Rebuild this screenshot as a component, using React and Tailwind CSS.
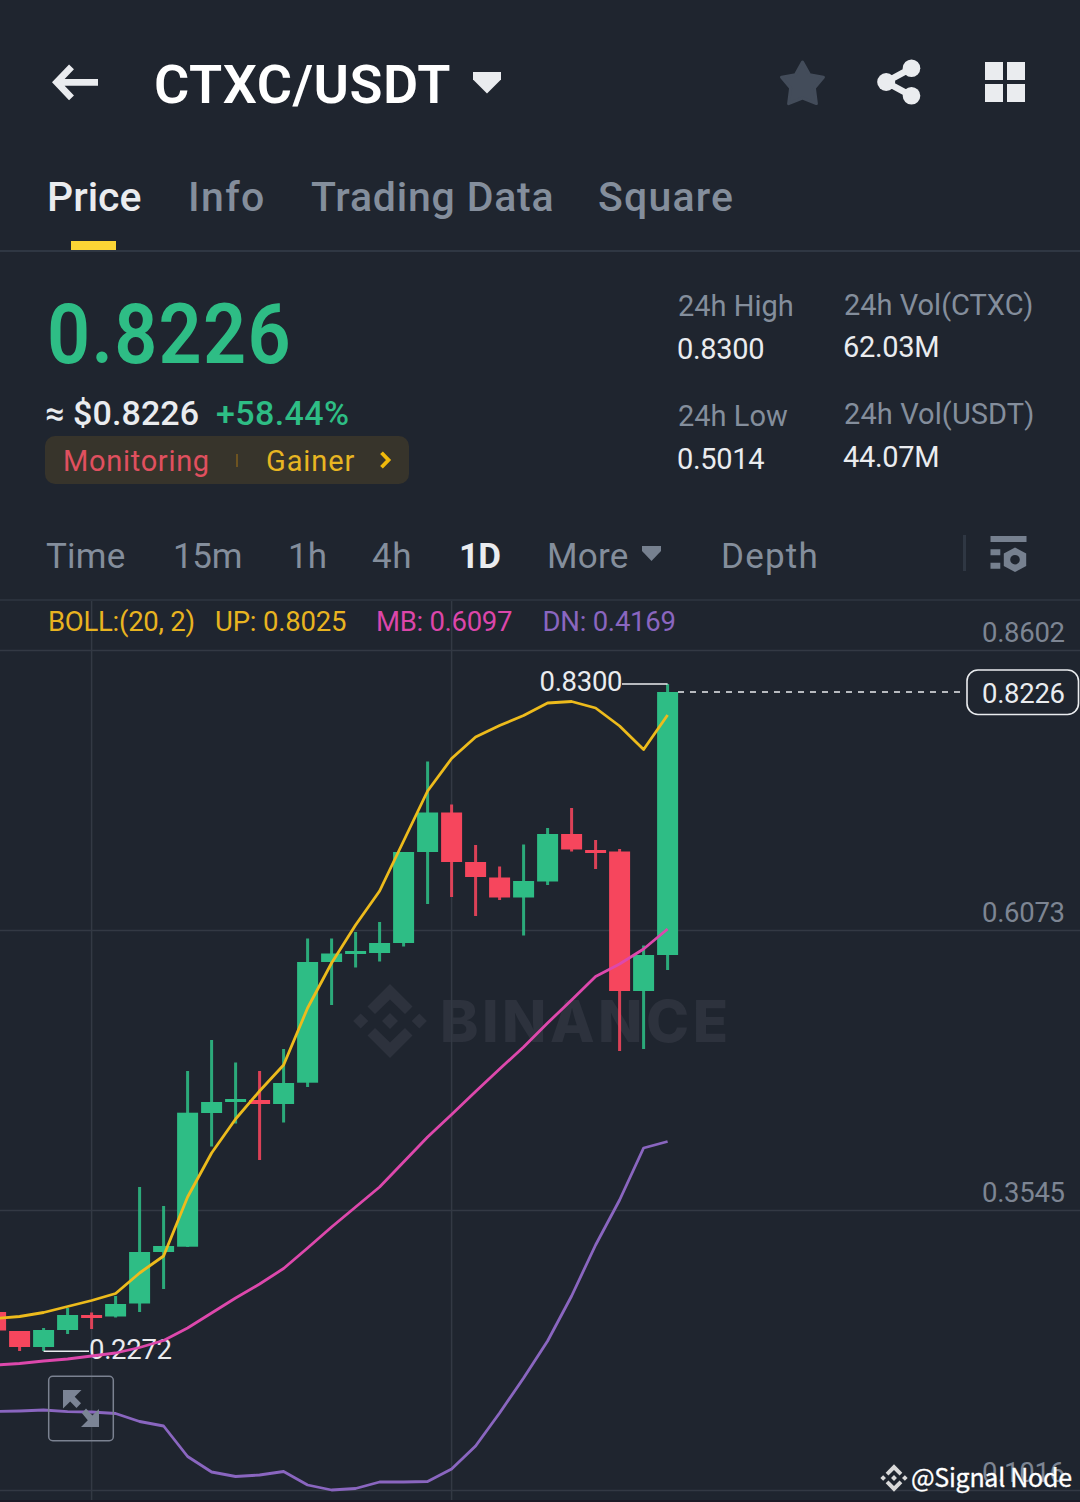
import React from 'react';
import clsx from 'clsx';

const UP = '#2ebd85';
const DOWN = '#f6465d';
const FIRST_X = -4.4;
const STEP = 24;

const tabs = [
  { label: 'Price', className: 'w-[141px]', active: true },
  { label: 'Info', className: 'w-[123px] tracking-[1.4px]' },
  { label: 'Trading Data', className: 'w-[287px] tracking-[0.8px]' },
  { label: 'Square', className: 'tracking-[1.2px]' },
];

const intervals = [
  { label: 'Time', className: 'w-[127px] tracking-[0.2px]' },
  { label: '15m', className: 'w-[115px] tracking-[-0.3px]' },
  { label: '1h', className: 'w-[84px]' },
  { label: '4h', className: 'w-[87px] tracking-[0.5px]' },
  { label: '1D', className: 'w-[88px] tracking-[-0.8px]', active: true },
];

// [direction, high, body top, body bottom, low] in chart pixels
const candles = [
  ['down', 1312, 1312, 1330.5, 1330.5],
  ['down', 1331, 1331, 1347, 1351],
  ['up', 1328, 1330, 1347, 1351],
  ['up', 1308, 1315, 1330, 1334],
  ['down', 1312.5, 1315, 1318, 1329],
  ['up', 1296, 1304, 1316.5, 1317.5],
  ['up', 1187, 1252, 1303.5, 1312],
  ['up', 1206, 1246, 1252, 1289],
  ['up', 1071, 1112.7, 1246.7, 1247],
  ['up', 1040, 1102, 1113, 1146.5],
  ['up', 1062.5, 1099, 1102, 1123.5],
  ['down', 1071, 1100, 1104, 1160],
  ['up', 1049, 1083, 1104, 1122.5],
  ['up', 938.5, 962, 1082.7, 1087],
  ['up', 938.5, 953.5, 962, 1005],
  ['up', 932, 951, 954, 967.5],
  ['up', 922, 943, 953, 961.5],
  ['up', 852, 852, 943, 946.5],
  ['up', 761.5, 812.5, 852, 904],
  ['down', 804.5, 812.5, 862, 897],
  ['down', 845, 862, 877, 916],
  ['down', 866.5, 877.5, 897.5, 900],
  ['up', 844.5, 881, 897.5, 935.5],
  ['up', 828, 834, 881.5, 885],
  ['down', 808, 834, 849.5, 851.5],
  ['down', 840, 850, 853, 869],
  ['down', 849, 851.5, 991, 1051],
  ['up', 945.5, 955, 991, 1049],
  ['up', 684, 692, 955, 970],
];

// Bollinger bands, one value per candle
const bands = {
  upper: [
    1318.5, 1316.5, 1312.5, 1306.5, 1300.5, 1293.5, 1273, 1256, 1197, 1153, 1119, 1091, 1065, 1008, 963,
    925, 891, 841, 791, 758.5, 737, 725.5, 715.5, 703, 701.5, 708, 726, 749.5, 715,
  ],
  middle: [
    1365, 1363.5, 1361, 1359, 1356, 1353, 1347.5, 1340.5, 1328, 1313, 1298, 1284, 1268.5, 1248, 1227,
    1207, 1187, 1162, 1137, 1114.5, 1091.5, 1069, 1047, 1023, 1000, 976.5, 964, 949, 929,
  ],
  lower: [
    1411.5, 1411, 1410, 1411.7, 1412, 1413.5, 1421.5, 1426, 1456.5, 1472, 1476.5, 1475, 1471.5, 1485,
    1490, 1488.5, 1482, 1482, 1481.5, 1469, 1446, 1413, 1378, 1341, 1296, 1245, 1200, 1148, 1141.5,
  ],
};

const priceLevels = [
  { y: 650.5, label: '0.8602' },
  { y: 930.5, label: '0.6073' },
  { y: 1210.5, label: '0.3545' },
  { y: 1490.5, label: '0.1016' },
];

const candleX = (index) => FIRST_X + index * STEP;
const toPoints = (values) => values.map((y, i) => `${candleX(i)},${y}`).join(' ');

const BinanceMark = ({ x, y, scale = 1, fill }) => (
  <g transform={`translate(${x} ${y}) scale(${scale})`} fill={fill}>
    <path d="M0 -37L22.5 -14.5L15 -7L0 -21.5L-15 -7L-22.5 -14.5Z" />
    <path d="M0 37L22.5 14.5L15 7L0 21.5L-15 7L-22.5 14.5Z" />
    <path d="M0 -8L8 0L0 8L-8 0Z" />
    <path d="M-29.3 -7.6L-21.7 0L-29.3 7.6L-36.9 0Z" />
    <path d="M29.3 -7.6L36.9 0L29.3 7.6L21.7 0Z" />
  </g>
);

const Header = () => (
  <header className="flex h-[166px] items-center pl-[52px] pr-[55px]">
    <svg className="h-[38px] w-[47px]" viewBox="0 0 47 38" fill="none" stroke="#eaecef" strokeWidth="6.8">
      <path d="M46 18.3H5M19.5 2.8L4.7 18.3L19.5 33.8" />
    </svg>
    <h1 className="ml-[55px] w-[319px] pt-[3px] text-[54px] leading-[60px] font-semibold tracking-[0.5px] text-white">
      CTXC/USDT
    </h1>
    <svg className="h-[22px] w-[28px]" viewBox="0 0 28 22" fill="#eaecef">
      <path d="M0 0H28V7.5L14 21.5L0 7.5Z" />
    </svg>

    <svg className="mr-[52px] ml-auto h-[46px] w-[45px]" viewBox="0 0 45 46" fill="#434c5a" stroke="#434c5a" strokeWidth="3" strokeLinejoin="round">
      <path d="M22.5 2L29.6 14.8L43.4 17.2L34.4 28L36.4 43.6L22.5 38L8.6 43.6L10.6 28L1.6 17.2L15.4 14.8Z" />
    </svg>
    <svg className="mr-[64px] mb-[2px] h-[46px] w-[44px]" viewBox="0 0 44 46" fill="#eaecef">
      <path d="M34.5 9.2L9 23L34.5 36.8" fill="none" stroke="#eaecef" strokeWidth="6.5" />
      <circle cx="34.5" cy="9.2" r="8.8" />
      <circle cx="9.2" cy="23" r="9" />
      <circle cx="34.5" cy="36.8" r="8.8" />
    </svg>
    <div className="mb-[2px] grid h-[40px] w-[40px] grid-cols-2 gap-[4px]">
      <span className="bg-[#eaecef]" />
      <span className="bg-[#eaecef]" />
      <span className="bg-[#eaecef]" />
      <span className="bg-[#eaecef]" />
    </div>
  </header>
);

const PageTabs = () => (
  <nav className="flex h-[86px] border-b-2 border-[#2f3743] pl-[47px]">
    {tabs.map((tab) => (
      <div key={tab.label} className={tab.className}>
        <div
          className={clsx(
            'text-[41px] leading-[62px] font-medium whitespace-nowrap',
            tab.active ? 'text-[#eaecef]' : 'text-[#848e9c]'
          )}
        >
          {tab.label}
        </div>
        {tab.active && <div className="mt-[13px] ml-6 h-[9px] w-[45px] bg-[#fcd535]" />}
      </div>
    ))}
  </nav>
);

const Stat = ({ label, value, labelClass }) => (
  <div>
    <div className={clsx('text-[29px] leading-9 whitespace-nowrap text-[#848e9c]', labelClass)}>{label}</div>
    <div className="-ml-px text-[29px] leading-9 tracking-[-0.3px] text-[#eaecef]">{value}</div>
  </div>
);

const Summary = () => (
  <section className="flex h-[260px] pl-[45px]">
    <div className="w-[633px] pt-[41px]">
      <div className="ml-[2px] origin-left scale-x-[0.91] text-[83px] leading-[84px] font-semibold tracking-[1.4px] text-[#2ebd85]">
        0.8226
      </div>
      <div className="mt-[14px] flex text-[34px] leading-[44px] font-medium whitespace-nowrap">
        <span className="w-[171px] tracking-[0.1px] text-[#eaecef]">≈ $0.8226</span>
        <span className="tracking-[0.4px] text-[#2ebd85]">+58.44%</span>
      </div>
      <div className="mt-px flex h-12 w-[364px] items-center rounded-[10px] bg-[#37342b] pl-[18px] text-[29px] leading-[48px]">
        <span className="w-[173px] pt-px tracking-[0.7px] text-[#e0505f]">Monitoring</span>
        <span className="h-[13px] w-[2px] bg-[#6d5320]" />
        <span className="ml-[28px] w-[114px] pt-px tracking-[0.9px] text-[#e8b622]">Gainer</span>
        <svg className="h-[18px] w-[12px]" viewBox="0 0 12 18" fill="none" stroke="#f0b90b" strokeWidth="3.8">
          <path d="M1.5 1.8L8.5 9L1.5 16.2" />
        </svg>
      </div>
    </div>
    <div className="flex w-[166px] flex-col gap-[31px] pt-[36px]">
      <Stat label="24h High" value="0.8300" labelClass="mb-[7px]" />
      <Stat label="24h Low" value="0.5014" labelClass="mb-[7px]" />
    </div>
    <div className="flex flex-col gap-[31px] pt-[35px]">
      <Stat label="24h Vol(CTXC)" value="62.03M" labelClass="mb-[6px]" />
      <Stat label="24h Vol(USDT)" value="44.07M" labelClass="mb-[7px] tracking-[0.1px]" />
    </div>
  </section>
);

const IntervalBar = () => (
  <div className="flex h-[89px] items-center border-b-2 border-[#2a313c] pl-[46px] text-[35px] text-[#848e9c]">
    {intervals.map((item) => (
      <span key={item.label} className={clsx('pt-[3px]', item.className, item.active && 'font-bold text-[#eaecef]')}>
        {item.label}
      </span>
    ))}
    <span className="w-[95px] pt-[3px] tracking-[0.2px]">More</span>
    <svg className="mb-[5px] h-[15px] w-[19px]" viewBox="0 0 19 15" fill="#76808f">
      <path d="M0 0H19V5L9.5 15L0 5Z" />
    </svg>
    <span className="ml-[60px] w-[242px] pt-[3px] tracking-[1.2px]">Depth</span>
    <span className="mb-[5px] h-9 w-[3px] bg-[#2f3743]" />
    <svg className="mb-[3px] ml-[24px] h-[36px] w-[37px]" viewBox="0 0 37 36" fill="#76808f">
      <path d="M0.5 0H36.5V6H0.5ZM0.5 13.3H10.3V19.3H0.5ZM0.5 26.8H10.3V32.8H0.5Z" />
      <path
        fillRule="evenodd"
        d="M25 11.5L36.2 17.5V30L25 36L13.8 30V17.5ZM25 18.9A4.8 4.8 0 1 0 25 28.5A4.8 4.8 0 1 0 25 18.9Z"
      />
    </svg>
  </div>
);

const Chart = () => (
  <svg className="block h-[901px] w-[1080px]" viewBox="0 601 1080 901" fontSize="27.5">
    {/* Watermark */}
    <BinanceMark x={390} y={1021} fill="#2d323d" />
    <text
      x="440"
      y="1041.5"
      fontSize="58"
      textLength="288"
      fill="#2d323d"
      className="font-['Inter',sans-serif] font-extrabold"
    >
      BINANCE
    </text>

    {/* Grid */}
    <g stroke="#333944" strokeWidth="1.5">
      {priceLevels.map(({ y }) => (
        <path key={y} d={`M0 ${y}H1080`} />
      ))}
      <path d="M91.6 601V1502M451.6 601V1502" />
    </g>
    {priceLevels.map(({ y, label }) => (
      <text key={label} x="982" y={y - 8.7} fill="#7d8593" textLength="83">
        {label}
      </text>
    ))}

    {/* Candles */}
    {candles.map(([direction, high, top, bottom, low], i) => {
      const color = direction === 'up' ? UP : DOWN;
      return (
        <g key={i} fill={color}>
          <rect x={candleX(i) - 1.5} y={high} width="3" height={low - high} opacity="0.88" />
          <rect x={candleX(i) - 10.5} y={top} width="21" height={bottom - top} />
        </g>
      );
    })}

    {/* High and low markers */}
    <g stroke="#eaecef" strokeWidth="1.6">
      <path d="M622 684H667.6M43.6 1351.3H89" />
      <path d="M678 692H962" strokeDasharray="6 6" />
    </g>
    <text x="539.5" y="690.7" fill="#eaecef" textLength="83">0.8300</text>
    <text x="89" y="1359" fill="#eaecef" textLength="83">0.2272</text>

    {/* Bollinger bands */}
    <g fill="none" strokeWidth="2.8" strokeLinejoin="round">
      <polyline points={toPoints(bands.upper)} stroke="#edbb1c" />
      <polyline points={toPoints(bands.middle)} stroke="#dd48ac" />
      <polyline points={toPoints(bands.lower)} stroke="#8a66c0" />
    </g>
    <text x="48" y="630.7" fill="#e8b420" textLength="147">BOLL:(20, 2)</text>
    <text x="215" y="630.7" fill="#e8b420" textLength="131.5">UP: 0.8025</text>
    <text x="376" y="630.7" fill="#dc46aa" textLength="136.5">MB: 0.6097</text>
    <text x="542.5" y="630.7" fill="#8a66c0" textLength="133.5">DN: 0.4169</text>

    {/* Current price */}
    <rect x="967" y="670" width="111.5" height="44.5" rx="11" fill="#1f252f" stroke="#eaecef" strokeWidth="1.6" />
    <text x="982" y="702.7" fill="#eaecef" textLength="83">0.8226</text>

    {/* Fullscreen toggle */}
    <rect x="48.7" y="1376.3" width="64.6" height="64.4" rx="4" fill="none" stroke="#7b8291" strokeWidth="1.5" />
    <g fill="#7b8495">
      <path d="M63 1390H81.5L74.7 1396.7L81 1403.2L76.5 1408L70.2 1401.5L63 1408.5Z" />
      <path d="M99 1427H81L87.8 1420.3L82 1413.2L86 1408.5L92.3 1415.5L99 1409Z" />
    </g>

    {/* Author signature */}
    <BinanceMark x={894} y={1478} scale={0.37} fill="#d9d9d9" />
    <text
      x="911"
      y="1486.7"
      fontSize="25"
      textLength="161"
      fill="#ffffff"
      stroke="#ffffff"
      strokeWidth="0.3"
      className="font-['Noto_Sans_CJK_SC',sans-serif]"
    >
      @Signal Node
    </text>
    <path d="M0 1501H1080" stroke="#1b1a26" strokeWidth="2" />
  </svg>
);

const App = () => (
  <main className="w-[1080px] overflow-hidden bg-[#1f252f] font-['Roboto',sans-serif]">
    <Header />
    <PageTabs />
    <Summary />
    <IntervalBar />
    <Chart />
  </main>
);

export default App;
